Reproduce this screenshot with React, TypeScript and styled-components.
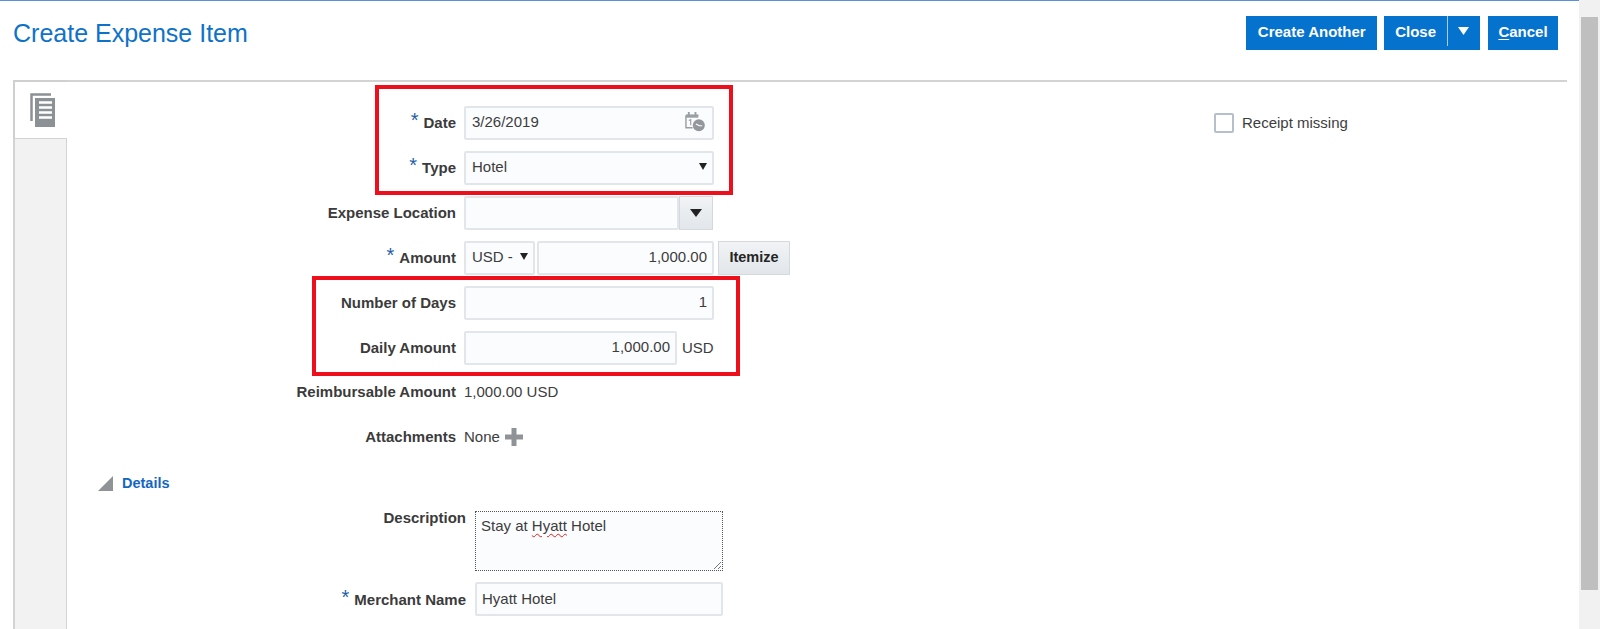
import styled, { createGlobalStyle } from "styled-components";

const GlobalStyle = createGlobalStyle`
    html, body {
        margin: 0;
        padding: 0;
        background: #ffffff;
        overflow: hidden;
    }
`;

const Page = styled.div`
    display: flex;
    width: 1600px;
    height: 629px;
    overflow: hidden;
    font-family: "Liberation Sans", Arial, sans-serif;
    font-size: 15px;
    color: #3d3d3d;
`;

const Main = styled.div`
    width: 1579px;
    border-top: 1px solid #5b8fdb;
    padding: 0 12px 0 13px;
    box-sizing: border-box;
`;

const Scrollbar = styled.div`
    width: 21px;
    padding: 17px 2px 0;
    box-sizing: border-box;
    background: #f1f1f1;
`;

const Thumb = styled.div`
    height: 573px;
    background: #bfbfbf;
`;

const Header = styled.div`
    display: flex;
    justify-content: space-between;
    height: 79px;
    padding-right: 9px;
`;

const Title = styled.h1`
    margin: 17px 0 0;
    font-size: 25px;
    line-height: 30px;
    font-weight: normal;
    color: #0f72c9;
`;

const Actions = styled.div`
    display: flex;
    gap: 7px;
    padding-top: 15px;
`;

const PrimaryButton = styled.div`
    display: flex;
    align-items: center;
    justify-content: center;
    height: 34px;
    padding: 0 11px 4px;
    background: #0572ce;
    color: #ffffff;
    font-weight: bold;
    font-size: 15px;
    box-sizing: border-box;
    u {
        text-underline-offset: 2px;
    }
`;

const CreateButton = styled(PrimaryButton)`
    padding: 0 11.5px 4px;
`;

const CancelButton = styled(PrimaryButton)`
    width: 70px;
    margin-left: 1px;
    padding: 0 0 4px;
`;

const CloseLabel = styled.span`
    display: flex;
    align-items: center;
    height: 30px;
    padding-right: 11px;
    border-right: 1px solid #a9cdec;
`;

const CloseArrow = styled.svg`
    width: 11px;
    height: 8px;
    margin-left: 10px;
`;

const Body = styled.div`
    display: flex;
    height: 549px;
    border-top: 2px solid #d3d3d3;
`;

const SideRail = styled.div`
    width: 54px;
    flex-shrink: 0;
    display: flex;
    flex-direction: column;
`;

const ActiveTab = styled.div`
    height: 58px;
    margin-top: -2px;
    padding: 11px 0 0 15px;
    box-sizing: border-box;
    background: #ffffff;
    border-left: 2px solid #cfcfcf;
    border-top: 2px solid #cfcfcf;
`;

const RailRest = styled.div`
    flex: 1;
    background: #f2f2f2;
    border: 1px solid #d3d3d3;
    border-left-width: 2px;
`;

const Content = styled.div`
    flex: 1;
    position: relative;
`;

const TopSection = styled.div`
    display: flex;
    padding-top: 24px;
`;

const Fields = styled.div`
    width: 733px;
    display: flex;
    flex-direction: column;
    gap: 11px;
`;

const Row = styled.div<{ $labelWidth?: number; $gap?: number }>`
    display: grid;
    grid-template-columns: ${(p) => p.$labelWidth ?? 389}px 1fr;
    column-gap: ${(p) => p.$gap ?? 8}px;
    align-items: center;
`;

const TextRow = styled(Row)`
    height: 33px;
`;

const AttachmentRow = styled(TextRow)`
    box-sizing: border-box;
    padding-top: 2px;
`;

const PlainLabel = styled.div`
    text-align: right;
    font-weight: bold;
    color: #3b3b3b;
    white-space: nowrap;
`;

const Label = styled(PlainLabel)`
    padding-bottom: 2px;
`;

const DescriptionLabel = styled(PlainLabel)`
    margin-top: -2px;
`;

const Required = styled.span`
    color: #1f5fa8;
    font-size: 20px;
    font-weight: normal;
    line-height: 14px;
    margin-right: 5px;
    vertical-align: 1px;
`;

const Field = styled.div<{ $width?: number; $right?: boolean }>`
    display: flex;
    align-items: center;
    justify-content: ${(p) => (p.$right ? "flex-end" : "space-between")};
    width: ${(p) => p.$width ?? 250}px;
    height: 34px;
    padding: 0 5px 4px 6px;
    box-sizing: border-box;
    background: #fbfcfe;
    border: 2px solid #e2e6eb;
    border-radius: 2px;
    white-space: nowrap;
`;

const DateField = styled(Field)`
    padding-right: 7px;
`;

const AmountField = styled(Field)`
    margin-left: 2px;
`;

const MerchantField = styled(Field)`
    padding: 0 5px 2px 5px;
`;

const Controls = styled.div`
    display: flex;
    align-items: center;
`;

const SmallArrow = styled.svg<{ $large?: boolean }>`
    width: ${(p) => (p.$large ? 12 : 8)}px;
    height: ${(p) => (p.$large ? 8 : 7)}px;
`;

const LocationButton = styled.div`
    display: flex;
    align-items: center;
    justify-content: center;
    width: 34px;
    height: 34px;
    box-sizing: border-box;
    background: linear-gradient(#f1f3f5, #e2e6ea);
    border: 1px solid #d3d9df;
`;

const ItemizeButton = styled.div`
    display: flex;
    align-items: center;
    justify-content: center;
    width: 72px;
    height: 34px;
    margin-left: 4px;
    padding-bottom: 2px;
    box-sizing: border-box;
    background: linear-gradient(#f1f3f5, #e2e6ea);
    border: 1px solid #d3d9df;
    font-weight: bold;
    font-size: 14.5px;
    color: #252525;
`;

const UnitText = styled.span`
    margin-left: 5px;
    padding-bottom: 2px;
`;

const TextValue = styled.div`
    padding-bottom: 2px;
`;

const Receipt = styled.div`
    display: flex;
    align-items: center;
    gap: 8px;
    height: 20px;
    margin: 7px 0 0 414px;
    white-space: nowrap;
`;

const Checkbox = styled.div`
    width: 20px;
    height: 20px;
    box-sizing: border-box;
    border: 2px solid #b5c0cc;
    border-radius: 2px;
    background: #ffffff;
`;

const PlusIcon = styled.svg`
    width: 18px;
    height: 18px;
    margin-left: 5px;
`;

const InlineValue = styled.div`
    display: flex;
    align-items: center;
    padding-bottom: 2px;
`;

const SectionToggle = styled.div`
    display: flex;
    align-items: center;
    gap: 9px;
    margin: 20px 0 0 31px;
    height: 20px;
    color: #1367bf;
    font-weight: bold;
    font-size: 14.5px;
`;

const DetailRows = styled.div`
    display: flex;
    flex-direction: column;
    gap: 11px;
    margin-top: 18px;
`;

const TopAlignedRow = styled(Row)`
    align-items: start;
`;

const DescriptionBox = styled.div`
    position: relative;
    width: 248px;
    height: 60px;
    padding: 5px;
    box-sizing: border-box;
    background: #fbfcfe;
    border: 1px dotted #555555;
`;

const Misspelled = styled.span`
    text-decoration: underline wavy #e02020 1px;
    text-underline-offset: 2px;
`;

const ResizeGrip = styled.svg`
    position: absolute;
    right: 1px;
    bottom: 1px;
    width: 8px;
    height: 8px;
`;

// red call-outs drawn over the form
const Callout = styled.div<{ $left: number; $top: number; $width: number; $height: number }>`
    position: absolute;
    left: ${(p) => p.$left}px;
    top: ${(p) => p.$top}px;
    width: ${(p) => p.$width}px;
    height: ${(p) => p.$height}px;
    box-sizing: border-box;
    border: 4px solid #ee0f1c;
    pointer-events: none;
`;

function DownArrow({ large }: { large?: boolean }) {
    return (
        <SmallArrow $large={large} viewBox="0 0 8 7" preserveAspectRatio="none">
            <path d="M0 0h8L4 7z" fill="#222" />
        </SmallArrow>
    );
}

function CalendarIcon() {
    return (
        <svg width="20" height="21" viewBox="0 0 21 22">
            <path d="M1 4.5h13M1 4.5v13h7" fill="none" stroke="#9b9fa3" strokeWidth="1.5" />
            <path d="M1 4h13v3H1z" fill="#9b9fa3" />
            <path d="M4 1v4M11 1v4" stroke="#9b9fa3" strokeWidth="2" />
            <path d="M4 10l2-1v6" fill="none" stroke="#9b9fa3" strokeWidth="1.2" />
            <circle cx="14.5" cy="15" r="6.3" fill="#94989c" />
            <path d="M11.5 13.5l3.5 2h3" fill="none" stroke="#ffffff" strokeWidth="1.2" />
        </svg>
    );
}

function DocumentsIcon() {
    return (
        <svg width="25" height="35" viewBox="0 0 25 35" style={{ display: "block" }}>
            <path d="M1.5 28V1.5H21" fill="none" stroke="#8c9196" strokeWidth="2.5" />
            <rect x="5" y="5" width="20" height="29" fill="#8c9196" />
            <path d="M9 9.5h13M9 14.5h13M9 19.5h13M9 24.5h13" stroke="#ffffff" strokeWidth="2.4" />
        </svg>
    );
}

export default function App() {
    return (
        <Page>
            <GlobalStyle />
            <Main>
                <Header>
                    <Title>Create Expense Item</Title>
                    <Actions>
                        <CreateButton>Create Another</CreateButton>
                        <PrimaryButton>
                            <CloseLabel>Close</CloseLabel>
                            <CloseArrow viewBox="0 0 11 8">
                                <path d="M0 0h11L5.5 8z" fill="#ffffff" />
                            </CloseArrow>
                        </PrimaryButton>
                        <CancelButton>
                            <span><u>C</u>ancel</span>
                        </CancelButton>
                    </Actions>
                </Header>
                <Body>
                    <SideRail>
                        <ActiveTab>
                            <DocumentsIcon />
                        </ActiveTab>
                        <RailRest />
                    </SideRail>
                    <Content>
                        <TopSection>
                            <Fields>
                                <Row>
                                    <Label><Required>*</Required>Date</Label>
                                    <DateField>3/26/2019<CalendarIcon /></DateField>
                                </Row>
                                <Row>
                                    <Label><Required>*</Required>Type</Label>
                                    <Field>Hotel<DownArrow /></Field>
                                </Row>
                                <Row>
                                    <Label>Expense Location</Label>
                                    <Controls>
                                        <Field $width={215} />
                                        <LocationButton><DownArrow large /></LocationButton>
                                    </Controls>
                                </Row>
                                <Row>
                                    <Label><Required>*</Required>Amount</Label>
                                    <Controls>
                                        <Field $width={71}>USD -<DownArrow /></Field>
                                        <AmountField $width={177} $right>1,000.00</AmountField>
                                        <ItemizeButton>Itemize</ItemizeButton>
                                    </Controls>
                                </Row>
                                <Row>
                                    <Label>Number of Days</Label>
                                    <Field $right>1</Field>
                                </Row>
                                <Row>
                                    <Label>Daily Amount</Label>
                                    <Controls>
                                        <Field $width={213} $right>1,000.00</Field>
                                        <UnitText>USD</UnitText>
                                    </Controls>
                                </Row>
                                <TextRow>
                                    <Label>Reimbursable Amount</Label>
                                    <TextValue>1,000.00 USD</TextValue>
                                </TextRow>
                                <AttachmentRow>
                                    <Label>Attachments</Label>
                                    <InlineValue>
                                        None
                                        <PlusIcon viewBox="0 0 18 18">
                                            <path d="M6.5 0h5v6.5H18v5h-6.5V18h-5v-6.5H0v-5h6.5z" fill="#8f9397" />
                                        </PlusIcon>
                                    </InlineValue>
                                </AttachmentRow>
                            </Fields>
                            <Receipt>
                                <Checkbox />
                                <TextValue>Receipt missing</TextValue>
                            </Receipt>
                        </TopSection>
                        <SectionToggle>
                            <svg width="15" height="15" viewBox="0 0 15 15">
                                <path d="M15 0v15H0z" fill="#8f9397" />
                            </svg>
                            Details
                        </SectionToggle>
                        <DetailRows>
                            <TopAlignedRow $labelWidth={399} $gap={9}>
                                <DescriptionLabel>Description</DescriptionLabel>
                                <DescriptionBox>
                                    Stay at <Misspelled>Hyatt</Misspelled> Hotel
                                    <ResizeGrip viewBox="0 0 8 8">
                                        <path d="M1 8l7-7M5 8l3-3" stroke="#777" strokeWidth="1" />
                                    </ResizeGrip>
                                </DescriptionBox>
                            </TopAlignedRow>
                            <Row $labelWidth={399} $gap={9}>
                                <PlainLabel><Required>*</Required>Merchant Name</PlainLabel>
                                <MerchantField $width={248}>Hyatt Hotel</MerchantField>
                            </Row>
                        </DetailRows>
                        <Callout $left={308} $top={3} $width={358} $height={110} />
                        <Callout $left={245} $top={194} $width={428} $height={100} />
                    </Content>
                </Body>
            </Main>
            <Scrollbar>
                <Thumb />
            </Scrollbar>
        </Page>
    );
}
